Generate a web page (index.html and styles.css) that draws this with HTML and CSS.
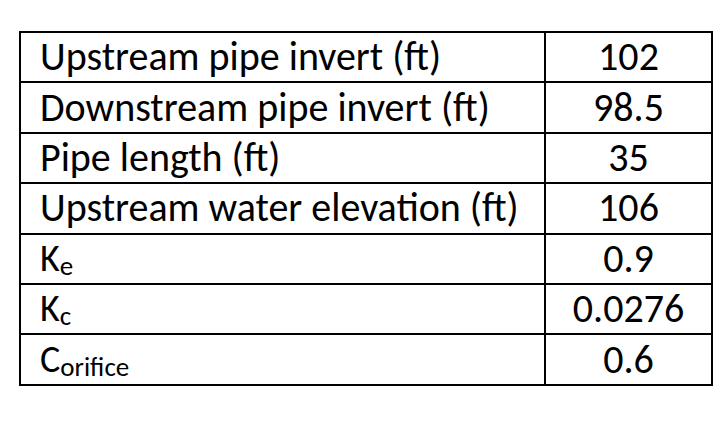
FILE: index.html
```html
<!DOCTYPE html>
<html>
<head>
<meta charset="utf-8">
<link rel="stylesheet" href="styles.css">
</head>
<body>
<table class="params">
  <colgroup><col class="c1"><col class="c2"></colgroup>
  <tr><td class="label">Upstream pipe invert (ft)</td><td class="value">102</td></tr>
  <tr><td class="label">Downstream pipe invert (ft)</td><td class="value">98.5</td></tr>
  <tr><td class="label">Pipe length (ft)</td><td class="value">35</td></tr>
  <tr><td class="label">Upstream water elevation (ft)</td><td class="value">106</td></tr>
  <tr><td class="label sym">K<sub>e</sub></td><td class="value">0.9</td></tr>
  <tr><td class="label sym">K<sub>c</sub></td><td class="value">0.0276</td></tr>
  <tr><td class="label sym">C<sub>orifice</sub></td><td class="value">0.6</td></tr>
</table>
</body>
</html>
```
FILE: styles.css
```css
html, body {
  margin: 0;
  padding: 0;
  background: #ffffff;
}
body {
  padding: 31px 0 0 19px;
  font-family: Carlito, Calibri, Lato, "Open Sans", sans-serif;
  color: #000;
}
.params {
  border-collapse: collapse;
  border: 2px solid #000;
  width: 692px;
  table-layout: fixed;
}
.c1 { width: 525px; }
.c2 { width: 167px; }
.params td {
  border: 2px solid #000;
  height: 48.4px;
  padding: 0;
  font-size: 40px;
  line-height: 1;
  white-space: nowrap;
}
.label {
  padding-left: 19px !important;
  text-align: left;
}
.value {
  text-align: center;
}
.params .sym {
  font-size: 38px;
}
.sym sub {
  font-size: 27px;
  vertical-align: -4px;
}
```
